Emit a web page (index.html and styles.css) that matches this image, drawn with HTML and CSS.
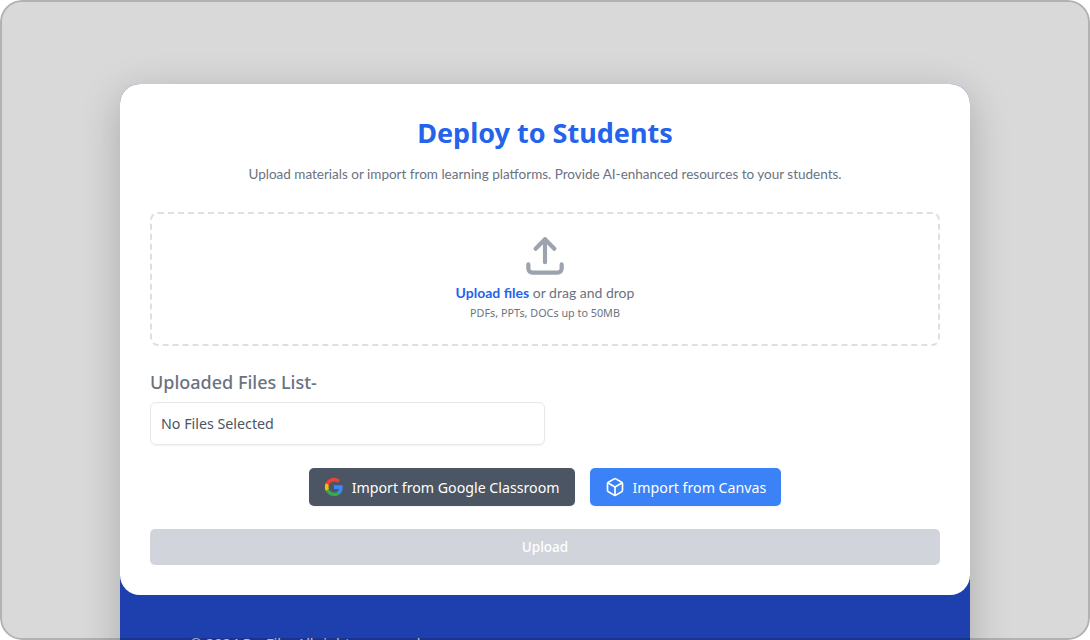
FILE: index.html
```html
<!DOCTYPE html>
<html lang="en">
<head>
    <meta charset="UTF-8" />
    <meta name="viewport" content="width=device-width, initial-scale=1.0" />
    <title>Deploy to Students</title>
    <link rel="stylesheet" href="styles.css">
</head>
<body>
    <div class="frame">
        <div class="window">
            <main class="card">
                <h1 class="title">Deploy to Students</h1>
                <p class="subtitle">Upload materials or import from learning platforms. Provide AI-enhanced resources to your students.</p>

                <div class="dropzone">
                    <svg class="upload-icon" viewBox="0 0 24 24" fill="none" stroke="currentColor" stroke-width="2" stroke-linecap="round" stroke-linejoin="round">
                        <path d="M4 16v2a2 2 0 0 0 2 2h12a2 2 0 0 0 2-2v-2" />
                        <path d="M7.5 8.5L12 4l4.5 4.5" />
                        <path d="M12 4v11" />
                    </svg>
                    <p class="drop-text"><span class="drop-link">Upload files</span> or drag and drop</p>
                    <p class="drop-hint">PDFs, PPTs, DOCs up to 50MB</p>
                </div>

                <h2 class="list-title">Uploaded Files List-</h2>
                <div class="file-box">No Files Selected</div>

                <div class="import-row">
                    <button type="button" class="btn btn-google">
                        <svg class="btn-icon" viewBox="0 0 24 24">
                            <path fill="#4285f4" d="M22.56 12.25c0-.78-.07-1.53-.2-2.25H12v4.26h5.92c-.26 1.37-1.04 2.53-2.21 3.31v2.77h3.57c2.08-1.92 3.28-4.74 3.28-8.09z" />
                            <path fill="#34a853" d="M12 23c2.97 0 5.46-.98 7.28-2.66l-3.57-2.77c-.98.66-2.23 1.06-3.71 1.06-2.86 0-5.29-1.93-6.16-4.53H2.18v2.84C3.99 20.53 7.7 23 12 23z" />
                            <path fill="#fbbc05" d="M5.84 14.09c-.22-.66-.35-1.36-.35-2.09s.13-1.43.35-2.09V7.07H2.18C1.43 8.55 1 10.22 1 12s.43 3.45 1.18 4.93l3.66-2.84z" />
                            <path fill="#ea4335" d="M12 5.38c1.62 0 3.06.56 4.21 1.64l3.15-3.15C17.45 2.09 14.97 1 12 1 7.7 1 3.99 3.47 2.18 7.07l3.66 2.84c.87-2.6 3.3-4.53 6.16-4.53z" />
                        </svg>
                        Import from Google Classroom
                    </button>
                    <button type="button" class="btn btn-canvas">
                        <svg class="btn-icon" viewBox="0 0 24 24" fill="none" stroke="currentColor" stroke-width="2" stroke-linecap="round" stroke-linejoin="round">
                            <path d="M21 16V8a2 2 0 0 0-1-1.73l-7-4a2 2 0 0 0-2 0l-7 4A2 2 0 0 0 3 8v8a2 2 0 0 0 1 1.73l7 4a2 2 0 0 0 2 0l7-4A2 2 0 0 0 21 16z" />
                            <path d="M3.27 6.96L12 12.01l8.73-5.05" />
                            <path d="M12 22.08V12" />
                        </svg>
                        Import from Canvas
                    </button>
                </div>

                <button type="button" class="submit" disabled>Upload</button>
            </main>
            <footer class="footer">© 2024 ProFile. All rights reserved.</footer>
        </div>
    </div>
</body>
</html>
```

FILE: styles.css
```css
* {
    box-sizing: border-box;
}

html,
body {
    margin: 0;
    padding: 0;
    height: 100%;
    background: #fff;
    overflow: hidden;
}

body {
    font-family: 'Noto Sans', 'Open Sans', sans-serif;
}

.frame {
    position: relative;
    width: 1090px;
    height: 640px;
    padding: 84px 120px 0;
    background: #d9d9d9;
    border-radius: 22px;
    overflow: hidden;
}

/* the edge of the frame sits on top of the page, so the footer shows through */
.frame::after {
    content: "";
    position: absolute;
    inset: 0;
    border: 2px solid rgba(0, 0, 0, 0.18);
    border-radius: 22px;
}

.window {
    box-shadow: 0 10px 40px rgba(0, 0, 0, 0.22);
    border-radius: 20px 20px 0 0;
    height: 700px;
    background: #1e40af;
}

.card {
    height: 511px;
    padding: 30px 30px 0;
    background: #fff;
    border-radius: 20px;
}

.title {
    margin: 0;
    color: #2563eb;
    font-size: 27px;
    line-height: 38px;
    font-weight: 700;
    text-align: center;
}

.subtitle {
    margin: 12px 0 0;
    color: #6b7280;
    font-family: 'Lato', 'Noto Sans', sans-serif;
    font-size: 13.5px;
    line-height: 20px;
    text-align: center;
}

.dropzone {
    margin-top: 28px;
    height: 134px;
    padding-top: 17px;
    border: 2px dashed #dcdfe3;
    border-radius: 8px;
    text-align: center;
}

.upload-icon {
    display: block;
    width: 50px;
    height: 50px;
    margin: 0 auto;
    color: #9ca3af;
}

.drop-text {
    margin: 2px 0 0;
    color: #6b7280;
    font-family: 'Lato', 'Noto Sans', sans-serif;
    font-size: 14px;
    line-height: 20px;
}

.drop-link {
    color: #2563eb;
    font-weight: 700;
}

.drop-hint {
    margin: 2px 0 0;
    color: #6b7280;
    font-size: 10.8px;
    line-height: 16px;
}

.list-title {
    margin: 23px 0 0;
    color: #6b7280;
    font-size: 18px;
    line-height: 26px;
    font-weight: 500;
}

.file-box {
    width: 395px;
    height: 43px;
    margin-top: 7px;
    padding: 0 10px;
    border: 1px solid #e5e7eb;
    border-radius: 6px;
    box-shadow: 0 1px 2px rgba(0, 0, 0, 0.05);
    color: #4b5563;
    font-size: 14.25px;
    line-height: 41px;
}

.import-row {
    display: flex;
    justify-content: center;
    gap: 15px;
    margin-top: 23px;
}

.btn {
    display: flex;
    align-items: center;
    gap: 8px;
    height: 38px;
    padding: 0 15px;
    border: none;
    border-radius: 5px;
    box-shadow: 0 1px 2px rgba(0, 0, 0, 0.05);
    color: #fff;
    font-family: inherit;
    font-size: 14.2px;
    cursor: pointer;
}

.btn-google {
    background: #4b5563;
}

.btn-canvas {
    background: #3b82f6;
}

.btn-icon {
    width: 20px;
    height: 20px;
}

.submit {
    display: block;
    width: 100%;
    height: 36px;
    margin-top: 23px;
    border: none;
    border-radius: 5px;
    background: #d1d5db;
    color: #fff;
    font-family: inherit;
    font-size: 13.5px;
    font-weight: 500;
}

.footer {
    padding: 38px 70px 0;
    color: #e5e7eb;
    font-size: 14.5px;
    line-height: 20px;
}
```
